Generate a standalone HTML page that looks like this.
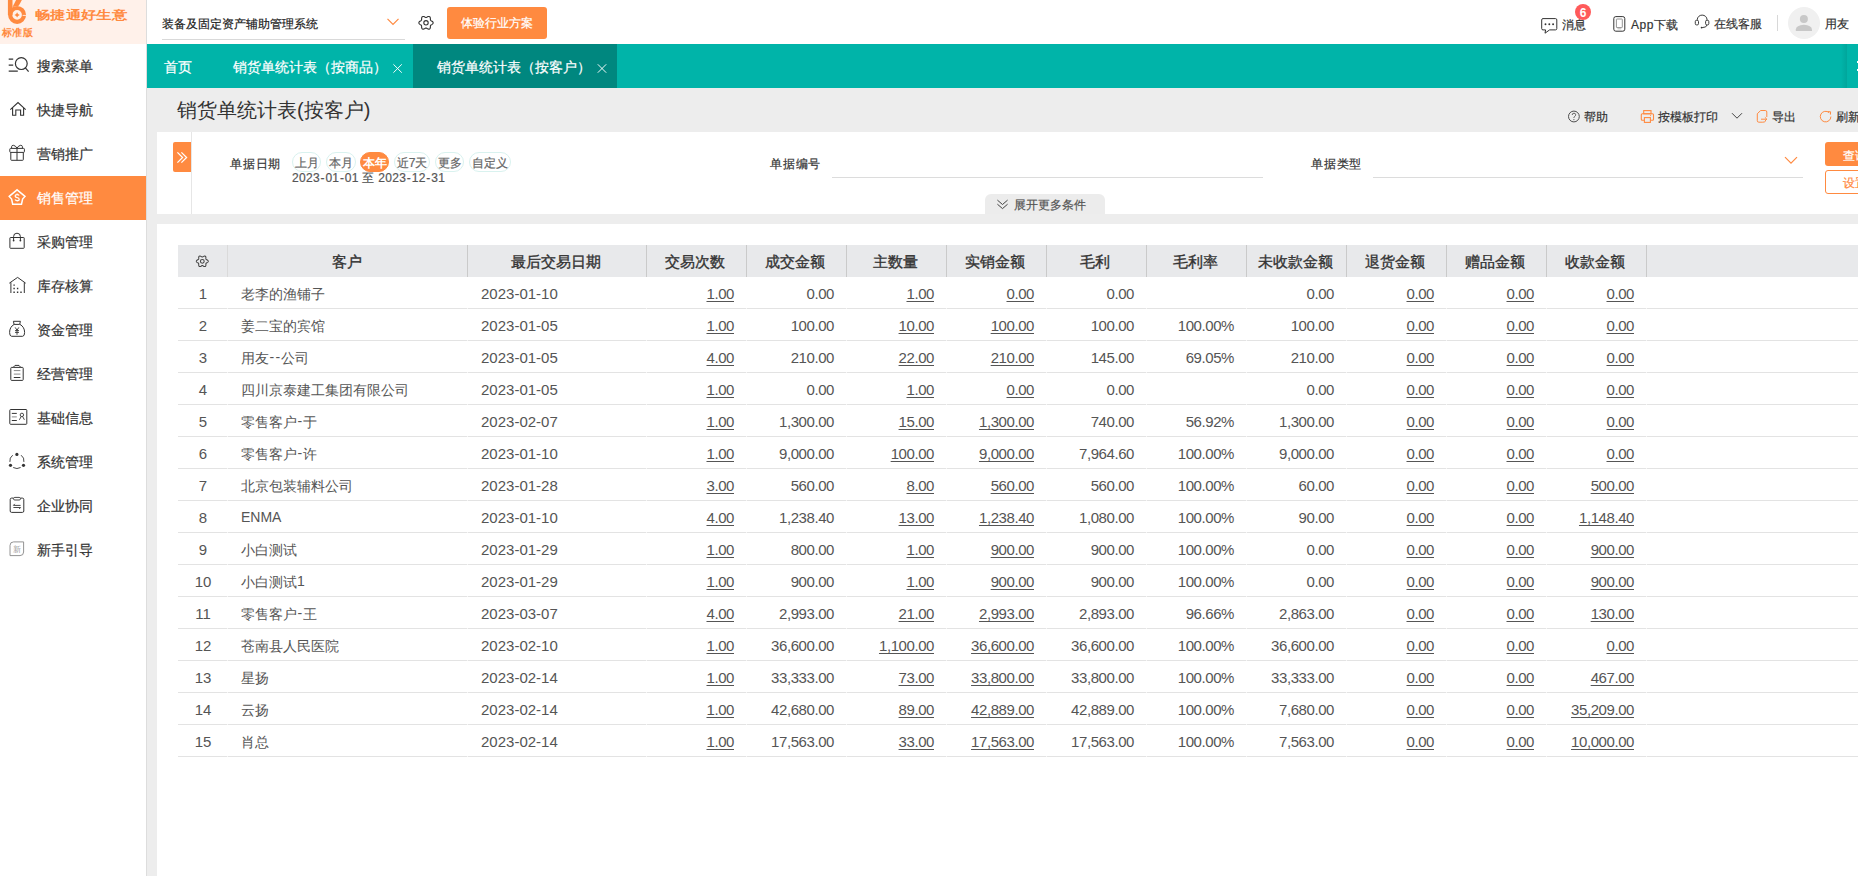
<!DOCTYPE html>
<html><head><meta charset="utf-8">
<style>
*{box-sizing:border-box;margin:0;padding:0}
html,body{width:1858px;height:876px;overflow:hidden;background:#fff;font-family:"Liberation Sans",sans-serif;color:#333}
.mi,.tab,.t,.chip{-webkit-text-stroke:0.2px currentColor}
.abs{position:absolute}
.t{position:absolute;white-space:nowrap}
#side{position:absolute;left:0;top:0;width:147px;height:876px;background:#fff;border-right:1px solid #dddddd}
#logo{position:absolute;left:0;top:0;width:146px;height:44px;background:#fff1ea}
.mi{position:absolute;left:0;width:146px;height:44px;font-size:14px;line-height:44px;color:#333}
.mi span{position:absolute;left:37px;top:0}
.mi.on{background:#ff8a40;color:#fff}
#hdr{position:absolute;left:147px;top:0;width:1711px;height:44px;background:#fff}
#tabs{position:absolute;left:147px;top:44px;width:1711px;height:44px;background:#00b4a9}
#gray{position:absolute;left:147px;top:88px;width:1711px;height:788px;background:#ededed}
#filter{position:absolute;left:157px;top:132px;width:1701px;height:82px;background:#fff}
#tblp{position:absolute;left:157px;top:224px;width:1701px;height:652px;background:#fff}
.tab{position:absolute;top:45px;height:44px;line-height:44px;font-size:14px;color:#fff}
.tb{font-size:12px;color:#333}
.chip{position:absolute;top:152px;height:20px;line-height:20px;font-size:12px;color:#666;border:1px solid #d9f2ef;border-radius:10px;text-align:center}
.th{position:absolute;background:#e8e9eb}
.vd{position:absolute;width:1px;height:32px;background:#cacaca}
.gp{position:absolute;width:1px;height:1px;background:#f6f6f6}
.hc{position:absolute;height:32px;line-height:33px;text-align:center;padding-right:2px;font-size:15px;font-weight:normal;-webkit-text-stroke:0.35px #333;color:#333}
.rl{position:absolute;height:1px;background:#e3e3e3}
.c{position:absolute;height:31px;line-height:32px;font-size:14px;color:#555;white-space:nowrap}
.ci{text-align:center}
.cl{padding-left:13px}
.cr{text-align:right;padding-right:12px;font-size:15px;letter-spacing:-0.42px;line-height:33px}
.dt{font-size:15px;line-height:33px}
.dt i{margin:0}
.ci{font-size:15px;line-height:33px}
u{text-decoration:underline;text-underline-offset:2px}
#ov{position:absolute;left:0;top:0}
i{font-style:normal;display:inline-block;margin:0 0.6px}
.cj{position:relative;top:1px}
</style></head><body>
<div id="side">
  <div id="logo">
    <div class="t" style="left:35px;top:7px;font-size:12px;font-weight:bold;color:#ff8a40;line-height:16px;transform:scaleX(1.28);transform-origin:0 0;-webkit-text-stroke:0">畅捷通好生意</div>
    <div class="t" style="left:2px;top:26px;font-size:10px;font-weight:bold;color:#ff8a40;line-height:14px;letter-spacing:0.3px;-webkit-text-stroke:0">标准版</div>
  </div>
  <div class="mi " style="top:44px"><span>搜索菜单</span></div><svg class="abs" style="left:0;top:44px" width="36" height="44" viewBox="0 44 36 44"><path d="M8.7 59.1 H13.2 M8.7 65.1 H13.2 M8.7 71.2 H17.8" stroke="#333" stroke-width="1.2" fill="none"/><circle cx="21.3" cy="63.6" r="5.9" fill="none" stroke="#333" stroke-width="1.2"/><path d="M25.4 67.8 L28.6 71.6" stroke="#333" stroke-width="1.2"/></svg>
  <div class="mi " style="top:88px"><span>快捷导航</span></div><svg class="abs" style="left:0;top:88px" width="36" height="44" viewBox="0 88 36 44"><path d="M10.3 109.6 L18 102.6 L25.7 109.6 M12.6 107.8 V115.3 H15.8 V110 H20.6 V115.3 H23.6 V107.8" fill="none" stroke="#333" stroke-width="1.1" stroke-linejoin="miter"/></svg>
  <div class="mi " style="top:132px"><span>营销推广</span></div><svg class="abs" style="left:0;top:132px" width="36" height="44" viewBox="0 132 36 44"><rect x="9.8" y="148.4" width="14.6" height="4" rx="0.8" fill="none" stroke="#333" stroke-width="1"/><path d="M10.8 152.4 V159.6 Q10.8 160.3 11.5 160.3 H22.6 Q23.3 160.3 23.3 159.6 V152.4 M17 148.4 V160.3 M11.6 148 V146.6 Q11.8 145.2 13.4 145.3 Q15.6 145.6 17 148.2 Q18.4 145.6 20.6 145.3 Q22.2 145.2 22.4 146.6 V148" fill="none" stroke="#333" stroke-width="1"/></svg>
  <div class="mi on" style="top:176px"><span>销售管理</span></div><svg class="abs" style="left:0;top:176px" width="36" height="44" viewBox="0 176 36 44"><path d="M17.1 189.8 L25 196.4 L22.6 199 L21.5 204.2 H12.7 L11.6 199 L9.2 196.4 Z" fill="none" stroke="#fff" stroke-width="1.5" stroke-linejoin="miter"/><path d="M19.1 195.5 Q18.6 194.5 17.1 194.5 Q15.1 194.5 15.1 196.1 Q15.1 197.4 17.1 197.6 Q19.2 197.8 19.2 199.2 Q19.2 200.7 17.1 200.7 Q15.5 200.7 15 199.6 M17.1 193.6 V194.5 M17.1 200.7 V201.6" fill="none" stroke="#fff" stroke-width="1.25"/></svg>
  <div class="mi " style="top:220px"><span>采购管理</span></div><svg class="abs" style="left:0;top:220px" width="36" height="44" viewBox="0 220 36 44"><rect x="9.9" y="237.5" width="14.3" height="10.8" rx="0.6" fill="none" stroke="#333" stroke-width="1"/><path d="M13.6 240.4 V236.5 A3.4 3.3 0 0 1 20.4 236.5 V240.4" fill="none" stroke="#333" stroke-width="1"/><circle cx="13.6" cy="240.6" r="0.9" fill="#333"/><circle cx="20.4" cy="240.6" r="0.9" fill="#333"/></svg>
  <div class="mi " style="top:264px"><span>库存核算</span></div><svg class="abs" style="left:0;top:264px" width="36" height="44" viewBox="0 264 36 44"><path d="M9.3 283.2 L17.6 277.4 L25.7 283.2 M10.9 282.4 V293 M24.3 282.4 V293" fill="none" stroke="#333" stroke-width="1"/><path d="M13.4 285.1 h1.4 M13.4 288.5 h1.4 M16.9 288.5 h1.4 M13.4 292.2 h1.4 M16.9 292.2 h1.4 M20.3 292.2 h1.4" stroke="#333" stroke-width="1.4"/></svg>
  <div class="mi " style="top:308px"><span>资金管理</span></div><svg class="abs" style="left:0;top:308px" width="36" height="44" viewBox="0 308 36 44"><path d="M13.4 321.3 H20.4 L19.7 324.4 H14.1 Z" fill="none" stroke="#333" stroke-width="1"/><path d="M14.1 324.4 Q9.6 327 9.6 332.5 Q9.6 336.2 11.6 336.3 H22.6 Q24.6 336.2 24.6 332.5 Q24.6 327 20 324.4" fill="none" stroke="#333" stroke-width="1"/><path d="M15.2 327.4 L17 330.3 L18.8 327.4 M17 330.3 V334.8 M15 330.6 H19 M15 332.4 H19" fill="none" stroke="#333" stroke-width="0.9"/></svg>
  <div class="mi " style="top:352px"><span>经营管理</span></div><svg class="abs" style="left:0;top:352px" width="36" height="44" viewBox="0 352 36 44"><path d="M13.3 367.4 H11.6 Q10.8 367.4 10.8 368.2 V379.6 Q10.8 380.4 11.6 380.4 H22.4 Q23.2 380.4 23.2 379.6 V368.2 Q23.2 367.4 22.4 367.4 H20.6" fill="none" stroke="#333" stroke-width="1"/><path d="M13.2 367.4 L15 365.4 H19 L20.8 367.4 Z" fill="none" stroke="#333" stroke-width="1"/><path d="M13.8 370.6 H20.4 M13.8 374.1 H20.4" stroke="#888" stroke-width="1"/><path d="M13.8 377.5 H20.4" stroke="#333" stroke-width="1"/></svg>
  <div class="mi " style="top:396px"><span>基础信息</span></div><svg class="abs" style="left:0;top:396px" width="36" height="44" viewBox="0 396 36 44"><rect x="9.8" y="409.5" width="17" height="14.8" rx="0.8" fill="none" stroke="#333" stroke-width="1"/><path d="M11.8 413.4 H16.8 M11.8 420.5 H16.8" stroke="#333" stroke-width="1"/><path d="M11.8 416.9 H16.8" stroke="#888" stroke-width="1"/><circle cx="21.9" cy="414.9" r="1.7" fill="none" stroke="#333" stroke-width="0.9"/><path d="M19.4 419.8 L21.2 416.5 M24.4 419.8 L22.6 416.5" fill="none" stroke="#333" stroke-width="0.9"/></svg>
  <div class="mi " style="top:440px"><span>系统管理</span></div><svg class="abs" style="left:0;top:440px" width="36" height="44" viewBox="0 440 36 44"><path d="M12.7 455.2 A7 7 0 0 0 9.9 461.9 M21.1 455.2 A7 7 0 0 1 23.9 461.9 M13.2 467.5 Q17 469.6 20.6 467.5" fill="none" stroke="#333" stroke-width="0.9"/><circle cx="16.9" cy="454.4" r="1.6" fill="#333"/><circle cx="10.5" cy="465.3" r="1.6" fill="#333"/><circle cx="23.5" cy="465.3" r="1.6" fill="#333"/></svg>
  <div class="mi " style="top:484px"><span>企业协同</span></div><svg class="abs" style="left:0;top:484px" width="36" height="44" viewBox="0 484 36 44"><path d="M13.3 498.1 H11.6 Q10.2 498.1 10.2 499.5 V511 Q10.2 512.4 11.6 512.4 H22.4 Q23.8 512.4 23.8 511 V499.5 Q23.8 498.1 22.4 498.1 H20.6" fill="none" stroke="#333" stroke-width="1"/><rect x="13.5" y="497.4" width="7" height="2.6" rx="1.3" fill="none" stroke="#333" stroke-width="0.9"/><path d="M13.4 505.4 H20.6 M13.4 505.4 L14.8 503.9 M20.6 507.5 H13.4 M20.6 507.5 L19.2 509" fill="none" stroke="#333" stroke-width="0.9"/></svg>
  <div class="mi " style="top:528px"><span>新手引导</span></div><svg class="abs" style="left:0;top:528px" width="36" height="44" viewBox="0 528 36 44"><path d="M13.6 541.9 H23.6 V552 Q23.6 555.6 20 555.6 H10 V545.5 Q10 541.9 13.6 541.9 Z" fill="none" stroke="#888" stroke-width="0.9"/><text x="16.8" y="552.2" font-size="7.5" text-anchor="middle" fill="#999" font-family="Liberation Sans">新</text></svg>
</div>
<div id="hdr"></div>
<div class="t" style="left:162px;top:16px;font-size:12px;line-height:16px;color:#222">装备及固定资产辅助管理系统</div>
<div class="abs" style="left:162px;top:39px;width:243px;height:1px;background:#d9d9d9"></div>
<div class="abs" style="left:447px;top:7px;width:100px;height:32px;background:#ff8a40;border-radius:3px;color:#fff;font-size:12px;line-height:33px;text-align:center;-webkit-text-stroke:0.2px #fff">体验行业方案</div>
<div class="t" style="left:1562px;top:17px;font-size:12px;line-height:16px;color:#333">消息</div>
<div class="abs" style="left:1575px;top:4px;width:16px;height:16px;border-radius:8px;background:#ff5a5a;color:#fff;font-size:12px;font-weight:bold;line-height:17px;padding-top:1px;text-align:center">6</div>
<div class="t" style="left:1631px;top:17px;font-size:12px;line-height:16px;color:#333;letter-spacing:0.5px">App下载</div>
<div class="t" style="left:1714px;top:16px;font-size:12px;line-height:16px;color:#333">在线客服</div>
<div class="abs" style="left:1777px;top:15px;width:1px;height:16px;background:#d8d8d8"></div>
<div class="abs" style="left:1788px;top:7px;width:32px;height:32px;border-radius:16px;background:#f0f0f0"></div>
<div class="t" style="left:1825px;top:16px;font-size:12px;line-height:16px;color:#333">用友</div>

<div id="tabs"></div>
<div class="abs" style="left:413px;top:44px;width:204px;height:44px;background:#00877f"></div>
<div class="abs" style="left:1841px;top:44px;width:6px;height:44px;background:linear-gradient(to right,rgba(0,60,55,0),rgba(0,60,55,0.12))"></div>
<div class="abs" style="left:1857px;top:61px;width:1px;height:2px;background:#fff"></div>
<div class="abs" style="left:1857px;top:69px;width:1px;height:2px;background:#fff"></div>
<div class="tab" style="left:164px">首页</div>
<div class="tab" style="left:233px">销货单统计表（按商品）</div>
<div class="tab" style="left:437px">销货单统计表（按客户）</div>

<div id="gray"></div>
<div class="t" style="left:177px;top:97px;font-size:20px;line-height:26px;color:#333;-webkit-text-stroke:0">销货单统计表(按客户)</div>
<div class="t tb" style="left:1584px;top:109px;line-height:16px">帮助</div>
<div class="t tb" style="left:1658px;top:109px;line-height:16px">按模板打印</div>
<div class="t tb" style="left:1772px;top:109px;line-height:16px">导出</div>
<div class="t tb" style="left:1836px;top:109px;line-height:16px">刷新</div>

<div id="filter"></div>
<div class="abs" style="left:191px;top:132px;width:1px;height:82px;background:#e6e6e6"></div>
<div class="abs" style="left:173px;top:142px;width:18px;height:30px;background:#ff8a40;border-radius:2px 0 0 2px"></div>
<div class="t" style="left:230px;top:156px;font-size:12px;line-height:16px;color:#333;letter-spacing:0.8px">单据日期</div>
<div class="chip" style="left:292px;width:29px">上月</div>
<div class="chip" style="left:326px;width:30px">本月</div>
<div class="chip" style="left:360px;width:29px;background:#ff8a40;border-color:#ff8a40;color:#fff;font-weight:bold;-webkit-text-stroke:0">本年</div>
<div class="chip" style="left:394px;width:36px">近7天</div>
<div class="chip" style="left:435px;width:29px">更多</div>
<div class="chip" style="left:469px;width:42px">自定义</div>
<div class="t" style="left:292px;top:170px;font-size:12px;line-height:16px;color:#555;letter-spacing:0.3px">2023<i>-</i>01<i>-</i>01 至 2023<i>-</i>12<i>-</i>31</div>
<div class="t" style="left:770px;top:156px;font-size:12px;line-height:16px;color:#333;letter-spacing:0.8px">单据编号</div>
<div class="abs" style="left:832px;top:177px;width:431px;height:1px;background:#dcdcdc"></div>
<div class="t" style="left:1311px;top:156px;font-size:12px;line-height:16px;color:#333;letter-spacing:0.8px">单据类型</div>
<div class="abs" style="left:1373px;top:177px;width:430px;height:1px;background:#dcdcdc"></div>
<div class="abs" style="left:1825px;top:142px;width:60px;height:24px;background:#ff8a40;border-radius:3px;color:#fff;font-size:12px;line-height:28px;padding-left:18px;-webkit-text-stroke:0.2px #fff">查询</div>
<div class="abs" style="left:1825px;top:170px;width:60px;height:24px;border:1px solid #ff8a40;border-radius:3px;color:#ff8a40;font-size:12px;line-height:24px;padding-left:17px;-webkit-text-stroke:0.2px #ff8a40">设置</div>
<div class="abs" style="left:985px;top:194px;width:120px;height:20px;background:#ececec;border-radius:6px 6px 0 0"></div>
<div class="t" style="left:1014px;top:197px;font-size:12px;line-height:16px;color:#555">展开更多条件</div>

<div id="tblp"></div>
<div class="th" style="left:178px;top:245px;width:1680px;height:32px"></div>
<svg class="abs" style="left:0;top:0" width="1858" height="876" viewBox="0 0 1858 876"><path d="M208.25 261.30 L208.17 261.68 L207.95 262.04 L207.62 262.36 L207.23 262.62 L206.82 262.83 L206.46 263.02 L206.17 263.21 L205.98 263.43 L205.89 263.70 L205.87 264.04 L205.89 264.45 L205.91 264.91 L205.88 265.38 L205.77 265.82 L205.57 266.19 L205.28 266.45 L204.90 266.58 L204.48 266.57 L204.04 266.44 L203.62 266.23 L203.23 265.98 L202.89 265.76 L202.58 265.61 L202.30 265.55 L202.02 265.61 L201.71 265.76 L201.37 265.98 L200.98 266.23 L200.56 266.44 L200.12 266.57 L199.70 266.58 L199.33 266.45 L199.03 266.19 L198.83 265.82 L198.72 265.38 L198.69 264.91 L198.71 264.45 L198.73 264.04 L198.71 263.70 L198.62 263.43 L198.43 263.21 L198.14 263.02 L197.78 262.83 L197.37 262.62 L196.98 262.36 L196.65 262.04 L196.43 261.68 L196.35 261.30 L196.43 260.92 L196.65 260.56 L196.98 260.24 L197.37 259.98 L197.78 259.77 L198.14 259.58 L198.43 259.39 L198.62 259.18 L198.71 258.90 L198.73 258.56 L198.71 258.15 L198.69 257.69 L198.72 257.22 L198.83 256.78 L199.03 256.41 L199.33 256.15 L199.70 256.02 L200.12 256.03 L200.56 256.16 L200.98 256.37 L201.37 256.62 L201.71 256.84 L202.02 256.99 L202.30 257.05 L202.58 256.99 L202.89 256.84 L203.23 256.62 L203.62 256.37 L204.04 256.16 L204.48 256.03 L204.90 256.02 L205.28 256.15 L205.57 256.41 L205.77 256.78 L205.88 257.22 L205.91 257.69 L205.89 258.15 L205.87 258.56 L205.89 258.90 L205.98 259.18 L206.17 259.39 L206.46 259.58 L206.82 259.77 L207.23 259.98 L207.62 260.24 L207.95 260.56 L208.17 260.92 Z" fill="none" stroke="#444" stroke-width="1.05"/><circle cx="202.3" cy="261.3" r="1.9" fill="none" stroke="#444" stroke-width="1.05"/></svg>
<div class="vd" style="left:227px;top:245px;background:#dadada"></div>
<div class="vd" style="left:467px;top:245px;"></div>
<div class="vd" style="left:646px;top:245px;"></div>
<div class="vd" style="left:746px;top:245px;"></div>
<div class="vd" style="left:846px;top:245px;"></div>
<div class="vd" style="left:946px;top:245px;"></div>
<div class="vd" style="left:1046px;top:245px;"></div>
<div class="vd" style="left:1146px;top:245px;"></div>
<div class="vd" style="left:1246px;top:245px;"></div>
<div class="vd" style="left:1346px;top:245px;"></div>
<div class="vd" style="left:1446px;top:245px;"></div>
<div class="vd" style="left:1546px;top:245px;"></div>
<div class="vd" style="left:1646px;top:245px;"></div>
<div class="hc" style="left:228px;top:245px;width:240px">客户</div>
<div class="hc" style="left:468px;top:245px;width:178px">最后交易日期</div>
<div class="hc" style="left:646px;top:245px;width:100px">交易次数</div>
<div class="hc" style="left:746px;top:245px;width:100px">成交金额</div>
<div class="hc" style="left:846px;top:245px;width:100px">主数量</div>
<div class="hc" style="left:946px;top:245px;width:100px">实销金额</div>
<div class="hc" style="left:1046px;top:245px;width:100px">毛利</div>
<div class="hc" style="left:1146px;top:245px;width:100px">毛利率</div>
<div class="hc" style="left:1246px;top:245px;width:100px">未收款金额</div>
<div class="hc" style="left:1346px;top:245px;width:100px">退货金额</div>
<div class="hc" style="left:1446px;top:245px;width:100px">赠品金额</div>
<div class="hc" style="left:1546px;top:245px;width:100px">收款金额</div>
<div class="rl" style="left:178px;top:308px;width:1680px"></div>
<div class="gp" style="left:227px;top:308px"></div>
<div class="gp" style="left:467px;top:308px"></div>
<div class="gp" style="left:646px;top:308px"></div>
<div class="gp" style="left:746px;top:308px"></div>
<div class="gp" style="left:846px;top:308px"></div>
<div class="gp" style="left:946px;top:308px"></div>
<div class="gp" style="left:1046px;top:308px"></div>
<div class="gp" style="left:1146px;top:308px"></div>
<div class="gp" style="left:1246px;top:308px"></div>
<div class="gp" style="left:1346px;top:308px"></div>
<div class="gp" style="left:1446px;top:308px"></div>
<div class="gp" style="left:1546px;top:308px"></div>
<div class="gp" style="left:1646px;top:308px"></div>
<div class="c ci" style="left:178px;top:277px;width:50px">1</div>
<div class="c cl" style="left:228px;top:277px;width:240px"><span class="cj">老李的渔铺子</span></div>
<div class="c cl dt" style="left:468px;top:277px;width:178px">2023<i>-</i>01<i>-</i>10</div>
<div class="c cr" style="left:646px;top:277px;width:100px"><u>1.00</u></div>
<div class="c cr" style="left:746px;top:277px;width:100px">0.00</div>
<div class="c cr" style="left:846px;top:277px;width:100px"><u>1.00</u></div>
<div class="c cr" style="left:946px;top:277px;width:100px"><u>0.00</u></div>
<div class="c cr" style="left:1046px;top:277px;width:100px">0.00</div>
<div class="c cr" style="left:1146px;top:277px;width:100px"></div>
<div class="c cr" style="left:1246px;top:277px;width:100px">0.00</div>
<div class="c cr" style="left:1346px;top:277px;width:100px"><u>0.00</u></div>
<div class="c cr" style="left:1446px;top:277px;width:100px"><u>0.00</u></div>
<div class="c cr" style="left:1546px;top:277px;width:100px"><u>0.00</u></div>
<div class="rl" style="left:178px;top:340px;width:1680px"></div>
<div class="gp" style="left:227px;top:340px"></div>
<div class="gp" style="left:467px;top:340px"></div>
<div class="gp" style="left:646px;top:340px"></div>
<div class="gp" style="left:746px;top:340px"></div>
<div class="gp" style="left:846px;top:340px"></div>
<div class="gp" style="left:946px;top:340px"></div>
<div class="gp" style="left:1046px;top:340px"></div>
<div class="gp" style="left:1146px;top:340px"></div>
<div class="gp" style="left:1246px;top:340px"></div>
<div class="gp" style="left:1346px;top:340px"></div>
<div class="gp" style="left:1446px;top:340px"></div>
<div class="gp" style="left:1546px;top:340px"></div>
<div class="gp" style="left:1646px;top:340px"></div>
<div class="c ci" style="left:178px;top:309px;width:50px">2</div>
<div class="c cl" style="left:228px;top:309px;width:240px"><span class="cj">姜二宝的宾馆</span></div>
<div class="c cl dt" style="left:468px;top:309px;width:178px">2023<i>-</i>01<i>-</i>05</div>
<div class="c cr" style="left:646px;top:309px;width:100px"><u>1.00</u></div>
<div class="c cr" style="left:746px;top:309px;width:100px">100.00</div>
<div class="c cr" style="left:846px;top:309px;width:100px"><u>10.00</u></div>
<div class="c cr" style="left:946px;top:309px;width:100px"><u>100.00</u></div>
<div class="c cr" style="left:1046px;top:309px;width:100px">100.00</div>
<div class="c cr" style="left:1146px;top:309px;width:100px">100.00%</div>
<div class="c cr" style="left:1246px;top:309px;width:100px">100.00</div>
<div class="c cr" style="left:1346px;top:309px;width:100px"><u>0.00</u></div>
<div class="c cr" style="left:1446px;top:309px;width:100px"><u>0.00</u></div>
<div class="c cr" style="left:1546px;top:309px;width:100px"><u>0.00</u></div>
<div class="rl" style="left:178px;top:372px;width:1680px"></div>
<div class="gp" style="left:227px;top:372px"></div>
<div class="gp" style="left:467px;top:372px"></div>
<div class="gp" style="left:646px;top:372px"></div>
<div class="gp" style="left:746px;top:372px"></div>
<div class="gp" style="left:846px;top:372px"></div>
<div class="gp" style="left:946px;top:372px"></div>
<div class="gp" style="left:1046px;top:372px"></div>
<div class="gp" style="left:1146px;top:372px"></div>
<div class="gp" style="left:1246px;top:372px"></div>
<div class="gp" style="left:1346px;top:372px"></div>
<div class="gp" style="left:1446px;top:372px"></div>
<div class="gp" style="left:1546px;top:372px"></div>
<div class="gp" style="left:1646px;top:372px"></div>
<div class="c ci" style="left:178px;top:341px;width:50px">3</div>
<div class="c cl" style="left:228px;top:341px;width:240px"><span class="cj">用友</span><i>-</i><i>-</i><span class="cj">公司</span></div>
<div class="c cl dt" style="left:468px;top:341px;width:178px">2023<i>-</i>01<i>-</i>05</div>
<div class="c cr" style="left:646px;top:341px;width:100px"><u>4.00</u></div>
<div class="c cr" style="left:746px;top:341px;width:100px">210.00</div>
<div class="c cr" style="left:846px;top:341px;width:100px"><u>22.00</u></div>
<div class="c cr" style="left:946px;top:341px;width:100px"><u>210.00</u></div>
<div class="c cr" style="left:1046px;top:341px;width:100px">145.00</div>
<div class="c cr" style="left:1146px;top:341px;width:100px">69.05%</div>
<div class="c cr" style="left:1246px;top:341px;width:100px">210.00</div>
<div class="c cr" style="left:1346px;top:341px;width:100px"><u>0.00</u></div>
<div class="c cr" style="left:1446px;top:341px;width:100px"><u>0.00</u></div>
<div class="c cr" style="left:1546px;top:341px;width:100px"><u>0.00</u></div>
<div class="rl" style="left:178px;top:404px;width:1680px"></div>
<div class="gp" style="left:227px;top:404px"></div>
<div class="gp" style="left:467px;top:404px"></div>
<div class="gp" style="left:646px;top:404px"></div>
<div class="gp" style="left:746px;top:404px"></div>
<div class="gp" style="left:846px;top:404px"></div>
<div class="gp" style="left:946px;top:404px"></div>
<div class="gp" style="left:1046px;top:404px"></div>
<div class="gp" style="left:1146px;top:404px"></div>
<div class="gp" style="left:1246px;top:404px"></div>
<div class="gp" style="left:1346px;top:404px"></div>
<div class="gp" style="left:1446px;top:404px"></div>
<div class="gp" style="left:1546px;top:404px"></div>
<div class="gp" style="left:1646px;top:404px"></div>
<div class="c ci" style="left:178px;top:373px;width:50px">4</div>
<div class="c cl" style="left:228px;top:373px;width:240px"><span class="cj">四川京泰建工集团有限公司</span></div>
<div class="c cl dt" style="left:468px;top:373px;width:178px">2023<i>-</i>01<i>-</i>05</div>
<div class="c cr" style="left:646px;top:373px;width:100px"><u>1.00</u></div>
<div class="c cr" style="left:746px;top:373px;width:100px">0.00</div>
<div class="c cr" style="left:846px;top:373px;width:100px"><u>1.00</u></div>
<div class="c cr" style="left:946px;top:373px;width:100px"><u>0.00</u></div>
<div class="c cr" style="left:1046px;top:373px;width:100px">0.00</div>
<div class="c cr" style="left:1146px;top:373px;width:100px"></div>
<div class="c cr" style="left:1246px;top:373px;width:100px">0.00</div>
<div class="c cr" style="left:1346px;top:373px;width:100px"><u>0.00</u></div>
<div class="c cr" style="left:1446px;top:373px;width:100px"><u>0.00</u></div>
<div class="c cr" style="left:1546px;top:373px;width:100px"><u>0.00</u></div>
<div class="rl" style="left:178px;top:436px;width:1680px"></div>
<div class="gp" style="left:227px;top:436px"></div>
<div class="gp" style="left:467px;top:436px"></div>
<div class="gp" style="left:646px;top:436px"></div>
<div class="gp" style="left:746px;top:436px"></div>
<div class="gp" style="left:846px;top:436px"></div>
<div class="gp" style="left:946px;top:436px"></div>
<div class="gp" style="left:1046px;top:436px"></div>
<div class="gp" style="left:1146px;top:436px"></div>
<div class="gp" style="left:1246px;top:436px"></div>
<div class="gp" style="left:1346px;top:436px"></div>
<div class="gp" style="left:1446px;top:436px"></div>
<div class="gp" style="left:1546px;top:436px"></div>
<div class="gp" style="left:1646px;top:436px"></div>
<div class="c ci" style="left:178px;top:405px;width:50px">5</div>
<div class="c cl" style="left:228px;top:405px;width:240px"><span class="cj">零售客户</span><i>-</i><span class="cj">于</span></div>
<div class="c cl dt" style="left:468px;top:405px;width:178px">2023<i>-</i>02<i>-</i>07</div>
<div class="c cr" style="left:646px;top:405px;width:100px"><u>1.00</u></div>
<div class="c cr" style="left:746px;top:405px;width:100px">1,300.00</div>
<div class="c cr" style="left:846px;top:405px;width:100px"><u>15.00</u></div>
<div class="c cr" style="left:946px;top:405px;width:100px"><u>1,300.00</u></div>
<div class="c cr" style="left:1046px;top:405px;width:100px">740.00</div>
<div class="c cr" style="left:1146px;top:405px;width:100px">56.92%</div>
<div class="c cr" style="left:1246px;top:405px;width:100px">1,300.00</div>
<div class="c cr" style="left:1346px;top:405px;width:100px"><u>0.00</u></div>
<div class="c cr" style="left:1446px;top:405px;width:100px"><u>0.00</u></div>
<div class="c cr" style="left:1546px;top:405px;width:100px"><u>0.00</u></div>
<div class="rl" style="left:178px;top:468px;width:1680px"></div>
<div class="gp" style="left:227px;top:468px"></div>
<div class="gp" style="left:467px;top:468px"></div>
<div class="gp" style="left:646px;top:468px"></div>
<div class="gp" style="left:746px;top:468px"></div>
<div class="gp" style="left:846px;top:468px"></div>
<div class="gp" style="left:946px;top:468px"></div>
<div class="gp" style="left:1046px;top:468px"></div>
<div class="gp" style="left:1146px;top:468px"></div>
<div class="gp" style="left:1246px;top:468px"></div>
<div class="gp" style="left:1346px;top:468px"></div>
<div class="gp" style="left:1446px;top:468px"></div>
<div class="gp" style="left:1546px;top:468px"></div>
<div class="gp" style="left:1646px;top:468px"></div>
<div class="c ci" style="left:178px;top:437px;width:50px">6</div>
<div class="c cl" style="left:228px;top:437px;width:240px"><span class="cj">零售客户</span><i>-</i><span class="cj">许</span></div>
<div class="c cl dt" style="left:468px;top:437px;width:178px">2023<i>-</i>01<i>-</i>10</div>
<div class="c cr" style="left:646px;top:437px;width:100px"><u>1.00</u></div>
<div class="c cr" style="left:746px;top:437px;width:100px">9,000.00</div>
<div class="c cr" style="left:846px;top:437px;width:100px"><u>100.00</u></div>
<div class="c cr" style="left:946px;top:437px;width:100px"><u>9,000.00</u></div>
<div class="c cr" style="left:1046px;top:437px;width:100px">7,964.60</div>
<div class="c cr" style="left:1146px;top:437px;width:100px">100.00%</div>
<div class="c cr" style="left:1246px;top:437px;width:100px">9,000.00</div>
<div class="c cr" style="left:1346px;top:437px;width:100px"><u>0.00</u></div>
<div class="c cr" style="left:1446px;top:437px;width:100px"><u>0.00</u></div>
<div class="c cr" style="left:1546px;top:437px;width:100px"><u>0.00</u></div>
<div class="rl" style="left:178px;top:500px;width:1680px"></div>
<div class="gp" style="left:227px;top:500px"></div>
<div class="gp" style="left:467px;top:500px"></div>
<div class="gp" style="left:646px;top:500px"></div>
<div class="gp" style="left:746px;top:500px"></div>
<div class="gp" style="left:846px;top:500px"></div>
<div class="gp" style="left:946px;top:500px"></div>
<div class="gp" style="left:1046px;top:500px"></div>
<div class="gp" style="left:1146px;top:500px"></div>
<div class="gp" style="left:1246px;top:500px"></div>
<div class="gp" style="left:1346px;top:500px"></div>
<div class="gp" style="left:1446px;top:500px"></div>
<div class="gp" style="left:1546px;top:500px"></div>
<div class="gp" style="left:1646px;top:500px"></div>
<div class="c ci" style="left:178px;top:469px;width:50px">7</div>
<div class="c cl" style="left:228px;top:469px;width:240px"><span class="cj">北京包装辅料公司</span></div>
<div class="c cl dt" style="left:468px;top:469px;width:178px">2023<i>-</i>01<i>-</i>28</div>
<div class="c cr" style="left:646px;top:469px;width:100px"><u>3.00</u></div>
<div class="c cr" style="left:746px;top:469px;width:100px">560.00</div>
<div class="c cr" style="left:846px;top:469px;width:100px"><u>8.00</u></div>
<div class="c cr" style="left:946px;top:469px;width:100px"><u>560.00</u></div>
<div class="c cr" style="left:1046px;top:469px;width:100px">560.00</div>
<div class="c cr" style="left:1146px;top:469px;width:100px">100.00%</div>
<div class="c cr" style="left:1246px;top:469px;width:100px">60.00</div>
<div class="c cr" style="left:1346px;top:469px;width:100px"><u>0.00</u></div>
<div class="c cr" style="left:1446px;top:469px;width:100px"><u>0.00</u></div>
<div class="c cr" style="left:1546px;top:469px;width:100px"><u>500.00</u></div>
<div class="rl" style="left:178px;top:532px;width:1680px"></div>
<div class="gp" style="left:227px;top:532px"></div>
<div class="gp" style="left:467px;top:532px"></div>
<div class="gp" style="left:646px;top:532px"></div>
<div class="gp" style="left:746px;top:532px"></div>
<div class="gp" style="left:846px;top:532px"></div>
<div class="gp" style="left:946px;top:532px"></div>
<div class="gp" style="left:1046px;top:532px"></div>
<div class="gp" style="left:1146px;top:532px"></div>
<div class="gp" style="left:1246px;top:532px"></div>
<div class="gp" style="left:1346px;top:532px"></div>
<div class="gp" style="left:1446px;top:532px"></div>
<div class="gp" style="left:1546px;top:532px"></div>
<div class="gp" style="left:1646px;top:532px"></div>
<div class="c ci" style="left:178px;top:501px;width:50px">8</div>
<div class="c cl" style="left:228px;top:501px;width:240px">ENMA</div>
<div class="c cl dt" style="left:468px;top:501px;width:178px">2023<i>-</i>01<i>-</i>10</div>
<div class="c cr" style="left:646px;top:501px;width:100px"><u>4.00</u></div>
<div class="c cr" style="left:746px;top:501px;width:100px">1,238.40</div>
<div class="c cr" style="left:846px;top:501px;width:100px"><u>13.00</u></div>
<div class="c cr" style="left:946px;top:501px;width:100px"><u>1,238.40</u></div>
<div class="c cr" style="left:1046px;top:501px;width:100px">1,080.00</div>
<div class="c cr" style="left:1146px;top:501px;width:100px">100.00%</div>
<div class="c cr" style="left:1246px;top:501px;width:100px">90.00</div>
<div class="c cr" style="left:1346px;top:501px;width:100px"><u>0.00</u></div>
<div class="c cr" style="left:1446px;top:501px;width:100px"><u>0.00</u></div>
<div class="c cr" style="left:1546px;top:501px;width:100px"><u>1,148.40</u></div>
<div class="rl" style="left:178px;top:564px;width:1680px"></div>
<div class="gp" style="left:227px;top:564px"></div>
<div class="gp" style="left:467px;top:564px"></div>
<div class="gp" style="left:646px;top:564px"></div>
<div class="gp" style="left:746px;top:564px"></div>
<div class="gp" style="left:846px;top:564px"></div>
<div class="gp" style="left:946px;top:564px"></div>
<div class="gp" style="left:1046px;top:564px"></div>
<div class="gp" style="left:1146px;top:564px"></div>
<div class="gp" style="left:1246px;top:564px"></div>
<div class="gp" style="left:1346px;top:564px"></div>
<div class="gp" style="left:1446px;top:564px"></div>
<div class="gp" style="left:1546px;top:564px"></div>
<div class="gp" style="left:1646px;top:564px"></div>
<div class="c ci" style="left:178px;top:533px;width:50px">9</div>
<div class="c cl" style="left:228px;top:533px;width:240px"><span class="cj">小白测试</span></div>
<div class="c cl dt" style="left:468px;top:533px;width:178px">2023<i>-</i>01<i>-</i>29</div>
<div class="c cr" style="left:646px;top:533px;width:100px"><u>1.00</u></div>
<div class="c cr" style="left:746px;top:533px;width:100px">800.00</div>
<div class="c cr" style="left:846px;top:533px;width:100px"><u>1.00</u></div>
<div class="c cr" style="left:946px;top:533px;width:100px"><u>900.00</u></div>
<div class="c cr" style="left:1046px;top:533px;width:100px">900.00</div>
<div class="c cr" style="left:1146px;top:533px;width:100px">100.00%</div>
<div class="c cr" style="left:1246px;top:533px;width:100px">0.00</div>
<div class="c cr" style="left:1346px;top:533px;width:100px"><u>0.00</u></div>
<div class="c cr" style="left:1446px;top:533px;width:100px"><u>0.00</u></div>
<div class="c cr" style="left:1546px;top:533px;width:100px"><u>900.00</u></div>
<div class="rl" style="left:178px;top:596px;width:1680px"></div>
<div class="gp" style="left:227px;top:596px"></div>
<div class="gp" style="left:467px;top:596px"></div>
<div class="gp" style="left:646px;top:596px"></div>
<div class="gp" style="left:746px;top:596px"></div>
<div class="gp" style="left:846px;top:596px"></div>
<div class="gp" style="left:946px;top:596px"></div>
<div class="gp" style="left:1046px;top:596px"></div>
<div class="gp" style="left:1146px;top:596px"></div>
<div class="gp" style="left:1246px;top:596px"></div>
<div class="gp" style="left:1346px;top:596px"></div>
<div class="gp" style="left:1446px;top:596px"></div>
<div class="gp" style="left:1546px;top:596px"></div>
<div class="gp" style="left:1646px;top:596px"></div>
<div class="c ci" style="left:178px;top:565px;width:50px">10</div>
<div class="c cl" style="left:228px;top:565px;width:240px"><span class="cj">小白测试</span>1</div>
<div class="c cl dt" style="left:468px;top:565px;width:178px">2023<i>-</i>01<i>-</i>29</div>
<div class="c cr" style="left:646px;top:565px;width:100px"><u>1.00</u></div>
<div class="c cr" style="left:746px;top:565px;width:100px">900.00</div>
<div class="c cr" style="left:846px;top:565px;width:100px"><u>1.00</u></div>
<div class="c cr" style="left:946px;top:565px;width:100px"><u>900.00</u></div>
<div class="c cr" style="left:1046px;top:565px;width:100px">900.00</div>
<div class="c cr" style="left:1146px;top:565px;width:100px">100.00%</div>
<div class="c cr" style="left:1246px;top:565px;width:100px">0.00</div>
<div class="c cr" style="left:1346px;top:565px;width:100px"><u>0.00</u></div>
<div class="c cr" style="left:1446px;top:565px;width:100px"><u>0.00</u></div>
<div class="c cr" style="left:1546px;top:565px;width:100px"><u>900.00</u></div>
<div class="rl" style="left:178px;top:628px;width:1680px"></div>
<div class="gp" style="left:227px;top:628px"></div>
<div class="gp" style="left:467px;top:628px"></div>
<div class="gp" style="left:646px;top:628px"></div>
<div class="gp" style="left:746px;top:628px"></div>
<div class="gp" style="left:846px;top:628px"></div>
<div class="gp" style="left:946px;top:628px"></div>
<div class="gp" style="left:1046px;top:628px"></div>
<div class="gp" style="left:1146px;top:628px"></div>
<div class="gp" style="left:1246px;top:628px"></div>
<div class="gp" style="left:1346px;top:628px"></div>
<div class="gp" style="left:1446px;top:628px"></div>
<div class="gp" style="left:1546px;top:628px"></div>
<div class="gp" style="left:1646px;top:628px"></div>
<div class="c ci" style="left:178px;top:597px;width:50px">11</div>
<div class="c cl" style="left:228px;top:597px;width:240px"><span class="cj">零售客户</span><i>-</i><span class="cj">王</span></div>
<div class="c cl dt" style="left:468px;top:597px;width:178px">2023<i>-</i>03<i>-</i>07</div>
<div class="c cr" style="left:646px;top:597px;width:100px"><u>4.00</u></div>
<div class="c cr" style="left:746px;top:597px;width:100px">2,993.00</div>
<div class="c cr" style="left:846px;top:597px;width:100px"><u>21.00</u></div>
<div class="c cr" style="left:946px;top:597px;width:100px"><u>2,993.00</u></div>
<div class="c cr" style="left:1046px;top:597px;width:100px">2,893.00</div>
<div class="c cr" style="left:1146px;top:597px;width:100px">96.66%</div>
<div class="c cr" style="left:1246px;top:597px;width:100px">2,863.00</div>
<div class="c cr" style="left:1346px;top:597px;width:100px"><u>0.00</u></div>
<div class="c cr" style="left:1446px;top:597px;width:100px"><u>0.00</u></div>
<div class="c cr" style="left:1546px;top:597px;width:100px"><u>130.00</u></div>
<div class="rl" style="left:178px;top:660px;width:1680px"></div>
<div class="gp" style="left:227px;top:660px"></div>
<div class="gp" style="left:467px;top:660px"></div>
<div class="gp" style="left:646px;top:660px"></div>
<div class="gp" style="left:746px;top:660px"></div>
<div class="gp" style="left:846px;top:660px"></div>
<div class="gp" style="left:946px;top:660px"></div>
<div class="gp" style="left:1046px;top:660px"></div>
<div class="gp" style="left:1146px;top:660px"></div>
<div class="gp" style="left:1246px;top:660px"></div>
<div class="gp" style="left:1346px;top:660px"></div>
<div class="gp" style="left:1446px;top:660px"></div>
<div class="gp" style="left:1546px;top:660px"></div>
<div class="gp" style="left:1646px;top:660px"></div>
<div class="c ci" style="left:178px;top:629px;width:50px">12</div>
<div class="c cl" style="left:228px;top:629px;width:240px"><span class="cj">苍南县人民医院</span></div>
<div class="c cl dt" style="left:468px;top:629px;width:178px">2023<i>-</i>02<i>-</i>10</div>
<div class="c cr" style="left:646px;top:629px;width:100px"><u>1.00</u></div>
<div class="c cr" style="left:746px;top:629px;width:100px">36,600.00</div>
<div class="c cr" style="left:846px;top:629px;width:100px"><u>1,100.00</u></div>
<div class="c cr" style="left:946px;top:629px;width:100px"><u>36,600.00</u></div>
<div class="c cr" style="left:1046px;top:629px;width:100px">36,600.00</div>
<div class="c cr" style="left:1146px;top:629px;width:100px">100.00%</div>
<div class="c cr" style="left:1246px;top:629px;width:100px">36,600.00</div>
<div class="c cr" style="left:1346px;top:629px;width:100px"><u>0.00</u></div>
<div class="c cr" style="left:1446px;top:629px;width:100px"><u>0.00</u></div>
<div class="c cr" style="left:1546px;top:629px;width:100px"><u>0.00</u></div>
<div class="rl" style="left:178px;top:692px;width:1680px"></div>
<div class="gp" style="left:227px;top:692px"></div>
<div class="gp" style="left:467px;top:692px"></div>
<div class="gp" style="left:646px;top:692px"></div>
<div class="gp" style="left:746px;top:692px"></div>
<div class="gp" style="left:846px;top:692px"></div>
<div class="gp" style="left:946px;top:692px"></div>
<div class="gp" style="left:1046px;top:692px"></div>
<div class="gp" style="left:1146px;top:692px"></div>
<div class="gp" style="left:1246px;top:692px"></div>
<div class="gp" style="left:1346px;top:692px"></div>
<div class="gp" style="left:1446px;top:692px"></div>
<div class="gp" style="left:1546px;top:692px"></div>
<div class="gp" style="left:1646px;top:692px"></div>
<div class="c ci" style="left:178px;top:661px;width:50px">13</div>
<div class="c cl" style="left:228px;top:661px;width:240px"><span class="cj">星扬</span></div>
<div class="c cl dt" style="left:468px;top:661px;width:178px">2023<i>-</i>02<i>-</i>14</div>
<div class="c cr" style="left:646px;top:661px;width:100px"><u>1.00</u></div>
<div class="c cr" style="left:746px;top:661px;width:100px">33,333.00</div>
<div class="c cr" style="left:846px;top:661px;width:100px"><u>73.00</u></div>
<div class="c cr" style="left:946px;top:661px;width:100px"><u>33,800.00</u></div>
<div class="c cr" style="left:1046px;top:661px;width:100px">33,800.00</div>
<div class="c cr" style="left:1146px;top:661px;width:100px">100.00%</div>
<div class="c cr" style="left:1246px;top:661px;width:100px">33,333.00</div>
<div class="c cr" style="left:1346px;top:661px;width:100px"><u>0.00</u></div>
<div class="c cr" style="left:1446px;top:661px;width:100px"><u>0.00</u></div>
<div class="c cr" style="left:1546px;top:661px;width:100px"><u>467.00</u></div>
<div class="rl" style="left:178px;top:724px;width:1680px"></div>
<div class="gp" style="left:227px;top:724px"></div>
<div class="gp" style="left:467px;top:724px"></div>
<div class="gp" style="left:646px;top:724px"></div>
<div class="gp" style="left:746px;top:724px"></div>
<div class="gp" style="left:846px;top:724px"></div>
<div class="gp" style="left:946px;top:724px"></div>
<div class="gp" style="left:1046px;top:724px"></div>
<div class="gp" style="left:1146px;top:724px"></div>
<div class="gp" style="left:1246px;top:724px"></div>
<div class="gp" style="left:1346px;top:724px"></div>
<div class="gp" style="left:1446px;top:724px"></div>
<div class="gp" style="left:1546px;top:724px"></div>
<div class="gp" style="left:1646px;top:724px"></div>
<div class="c ci" style="left:178px;top:693px;width:50px">14</div>
<div class="c cl" style="left:228px;top:693px;width:240px"><span class="cj">云扬</span></div>
<div class="c cl dt" style="left:468px;top:693px;width:178px">2023<i>-</i>02<i>-</i>14</div>
<div class="c cr" style="left:646px;top:693px;width:100px"><u>1.00</u></div>
<div class="c cr" style="left:746px;top:693px;width:100px">42,680.00</div>
<div class="c cr" style="left:846px;top:693px;width:100px"><u>89.00</u></div>
<div class="c cr" style="left:946px;top:693px;width:100px"><u>42,889.00</u></div>
<div class="c cr" style="left:1046px;top:693px;width:100px">42,889.00</div>
<div class="c cr" style="left:1146px;top:693px;width:100px">100.00%</div>
<div class="c cr" style="left:1246px;top:693px;width:100px">7,680.00</div>
<div class="c cr" style="left:1346px;top:693px;width:100px"><u>0.00</u></div>
<div class="c cr" style="left:1446px;top:693px;width:100px"><u>0.00</u></div>
<div class="c cr" style="left:1546px;top:693px;width:100px"><u>35,209.00</u></div>
<div class="rl" style="left:178px;top:756px;width:1680px"></div>
<div class="gp" style="left:227px;top:756px"></div>
<div class="gp" style="left:467px;top:756px"></div>
<div class="gp" style="left:646px;top:756px"></div>
<div class="gp" style="left:746px;top:756px"></div>
<div class="gp" style="left:846px;top:756px"></div>
<div class="gp" style="left:946px;top:756px"></div>
<div class="gp" style="left:1046px;top:756px"></div>
<div class="gp" style="left:1146px;top:756px"></div>
<div class="gp" style="left:1246px;top:756px"></div>
<div class="gp" style="left:1346px;top:756px"></div>
<div class="gp" style="left:1446px;top:756px"></div>
<div class="gp" style="left:1546px;top:756px"></div>
<div class="gp" style="left:1646px;top:756px"></div>
<div class="c ci" style="left:178px;top:725px;width:50px">15</div>
<div class="c cl" style="left:228px;top:725px;width:240px"><span class="cj">肖总</span></div>
<div class="c cl dt" style="left:468px;top:725px;width:178px">2023<i>-</i>02<i>-</i>14</div>
<div class="c cr" style="left:646px;top:725px;width:100px"><u>1.00</u></div>
<div class="c cr" style="left:746px;top:725px;width:100px">17,563.00</div>
<div class="c cr" style="left:846px;top:725px;width:100px"><u>33.00</u></div>
<div class="c cr" style="left:946px;top:725px;width:100px"><u>17,563.00</u></div>
<div class="c cr" style="left:1046px;top:725px;width:100px">17,563.00</div>
<div class="c cr" style="left:1146px;top:725px;width:100px">100.00%</div>
<div class="c cr" style="left:1246px;top:725px;width:100px">7,563.00</div>
<div class="c cr" style="left:1346px;top:725px;width:100px"><u>0.00</u></div>
<div class="c cr" style="left:1446px;top:725px;width:100px"><u>0.00</u></div>
<div class="c cr" style="left:1546px;top:725px;width:100px"><u>10,000.00</u></div>
<svg id="ov" width="1858" height="876" viewBox="0 0 1858 876">
<!-- logo -->
<path d="M7.9 0 H12.5 V15 H7.9 Z" fill="#ff8a40"/>
<path d="M16.1 0 H21.9 L18.7 5.8 L12.5 7 Z" fill="#ff8a40"/>
<circle cx="17.1" cy="14.9" r="6.9" fill="none" stroke="#ff8a40" stroke-width="4.2"/>
<path d="M22.6 15.4 L26.2 15.4" stroke="#fff1ea" stroke-width="0.9"/>
<path d="M17.1 12.2 Q17.6 14.4 19.8 14.9 Q17.6 15.4 17.1 17.6 Q16.6 15.4 14.4 14.9 Q16.6 14.4 17.1 12.2 Z" fill="#ff8a40"/>
<!-- header chevron + gear -->
<path d="M387.5 18.8 L393 24.3 L398.5 18.8" fill="none" stroke="#ff8a40" stroke-width="1.2"/>
<path d="M433.15 22.80 L433.06 23.26 L432.81 23.70 L432.44 24.08 L431.99 24.40 L431.53 24.68 L431.11 24.92 L430.77 25.15 L430.55 25.43 L430.43 25.76 L430.39 26.17 L430.39 26.65 L430.38 27.18 L430.33 27.73 L430.18 28.25 L429.93 28.68 L429.57 28.99 L429.13 29.15 L428.63 29.15 L428.11 29.02 L427.60 28.79 L427.14 28.52 L426.72 28.28 L426.35 28.11 L426.00 28.05 L425.65 28.11 L425.28 28.28 L424.86 28.52 L424.40 28.79 L423.89 29.02 L423.37 29.15 L422.87 29.15 L422.43 28.99 L422.07 28.68 L421.82 28.25 L421.67 27.73 L421.62 27.18 L421.61 26.65 L421.61 26.17 L421.57 25.76 L421.45 25.43 L421.23 25.15 L420.89 24.92 L420.47 24.68 L420.01 24.40 L419.56 24.08 L419.19 23.70 L418.94 23.26 L418.85 22.80 L418.94 22.34 L419.19 21.90 L419.56 21.52 L420.01 21.20 L420.47 20.92 L420.89 20.68 L421.23 20.45 L421.45 20.18 L421.57 19.84 L421.61 19.43 L421.61 18.95 L421.62 18.42 L421.67 17.87 L421.82 17.35 L422.07 16.92 L422.43 16.61 L422.87 16.45 L423.37 16.45 L423.89 16.58 L424.40 16.81 L424.86 17.08 L425.28 17.32 L425.65 17.49 L426.00 17.55 L426.35 17.49 L426.72 17.32 L427.14 17.08 L427.60 16.81 L428.11 16.58 L428.63 16.45 L429.13 16.45 L429.57 16.61 L429.93 16.92 L430.18 17.35 L430.33 17.87 L430.38 18.42 L430.39 18.95 L430.39 19.43 L430.43 19.84 L430.55 20.17 L430.77 20.45 L431.11 20.68 L431.53 20.92 L431.99 21.20 L432.44 21.52 L432.81 21.90 L433.06 22.34 Z" fill="none" stroke="#333" stroke-width="1.1"/>
<circle cx="426" cy="22.8" r="2.2" fill="none" stroke="#333" stroke-width="1.1"/>
<!-- message -->
<path d="M543 18.5" />
<path d="M1543 18.6 H1555.5 Q1556.8 18.6 1556.8 19.9 V28.6 Q1556.8 29.9 1555.5 29.9 H1549.6 L1545 33.2 L1545.6 29.9 H1543 Q1541.7 29.9 1541.7 28.6 V19.9 Q1541.7 18.6 1543 18.6 Z" fill="none" stroke="#333" stroke-width="1"/>
<circle cx="1545.5" cy="24.2" r="0.95" fill="#333"/><circle cx="1549.3" cy="24.2" r="0.95" fill="#333"/><circle cx="1553.1" cy="24.2" r="0.95" fill="#333"/>
<!-- app -->
<rect x="1613.8" y="16.6" width="11" height="14.6" rx="2" fill="none" stroke="#333" stroke-width="1"/>
<rect x="1616.4" y="19" width="5.9" height="8.6" rx="0.5" fill="none" stroke="#888" stroke-width="0.9"/>
<path d="M1617.5 28.8 H1621.2" stroke="#bbb" stroke-width="1"/>
<!-- headset -->
<path d="M1697.3 20.4 V19.6 A4.85 4.5 0 0 1 1707 19.6 V20.4" fill="none" stroke="#333" stroke-width="0.95"/>
<rect x="1695.3" y="20.3" width="3.2" height="4.6" rx="1.2" fill="none" stroke="#333" stroke-width="0.95"/>
<rect x="1705.6" y="20.3" width="3.2" height="4.6" rx="1.2" fill="none" stroke="#333" stroke-width="0.95"/>
<path d="M1707 25 Q1706.6 27.6 1702.2 27.6" fill="none" stroke="#333" stroke-width="0.95"/>
<circle cx="1701.6" cy="27.6" r="0.9" fill="#333"/>
<!-- avatar person -->
<circle cx="1803.9" cy="18.9" r="4" fill="#c8c8c8"/>
<path d="M1795.8 31 V29.5 Q1796.2 25.2 1803.9 24.8 Q1811.6 25.2 1812 29.5 V31 Z" fill="#c8c8c8"/>
<!-- tab close -->
<path d="M393.4 64.3 L401.8 72.7 M401.8 64.3 L393.4 72.7" stroke="#fff" stroke-width="0.95"/>
<path d="M597.8 64.3 L606.2 72.7 M606.2 64.3 L597.8 72.7" stroke="#fff" stroke-width="0.95"/>
<!-- toolbar -->
<circle cx="1573.9" cy="116.5" r="5.4" fill="none" stroke="#444" stroke-width="0.95"/>
<path d="M1572.2 115 Q1572.2 113.2 1574 113.2 Q1575.7 113.3 1575.7 114.8 Q1575.7 115.9 1574.6 116.4 Q1573.9 116.8 1573.9 118" fill="none" stroke="#555" stroke-width="0.9"/>
<circle cx="1573.9" cy="119.6" r="0.6" fill="#555"/>
<rect x="1643.7" y="110.6" width="7.3" height="3.2" fill="none" stroke="#ff8a40" stroke-width="1.1"/>
<path d="M1644 120.2 H1642.3 Q1641.3 120.2 1641.3 119.2 V114.8 Q1641.3 113.8 1642.3 113.8 H1652.5 Q1653.5 113.8 1653.5 114.8 V119.2 Q1653.5 120.2 1652.5 120.2 H1650.8" fill="none" stroke="#ff8a40" stroke-width="1.1"/>
<rect x="1644.4" y="117.6" width="6" height="4.8" fill="none" stroke="#ff8a40" stroke-width="1.1"/>
<circle cx="1650.6" cy="115.6" r="0.55" fill="#ff8a40"/>
<path d="M1732 113.2 L1737 118.2 L1742 113.2" fill="none" stroke="#444" stroke-width="1"/>
<path d="M1766.8 117 V112 Q1766.8 110.5 1765.3 110.5 H1760.7 L1757.3 113.7 V120.7 Q1757.3 122.2 1758.8 122.2 H1762.8 Q1764.6 122.2 1765.6 121.2" fill="none" stroke="#ff8a40" stroke-width="1"/>
<path d="M1761 119.2 H1766.8 M1764.9 117.3 L1766.8 119.2 L1764.9 121.1" fill="none" stroke="#ff8a40" stroke-width="1"/>
<path d="M1830.9 116.6 A5.3 5.3 0 1 1 1829.2 112.7" fill="none" stroke="#ff8a40" stroke-width="1"/>
<path d="M1827.6 111.6 L1830.6 111.8 L1830.4 114.6" fill="none" stroke="#ff8a40" stroke-width="1"/>
<!-- filter -->
<path d="M177.4 152.4 L182.6 157.5 L177.4 162.6 M181.4 152.4 L186.6 157.5 L181.4 162.6" fill="none" stroke="#fff" stroke-width="1.25"/>
<path d="M1785 157.2 L1791 163.2 L1797 157.2" fill="none" stroke="#ff8a40" stroke-width="1.2"/>
<path d="M997.4 200.1 L1002.5 204.5 L1007.6 200.1 M997.4 204.2 L1002.5 208.6 L1007.6 204.2" fill="none" stroke="#444" stroke-width="1"/>
</svg>
</body></html>
